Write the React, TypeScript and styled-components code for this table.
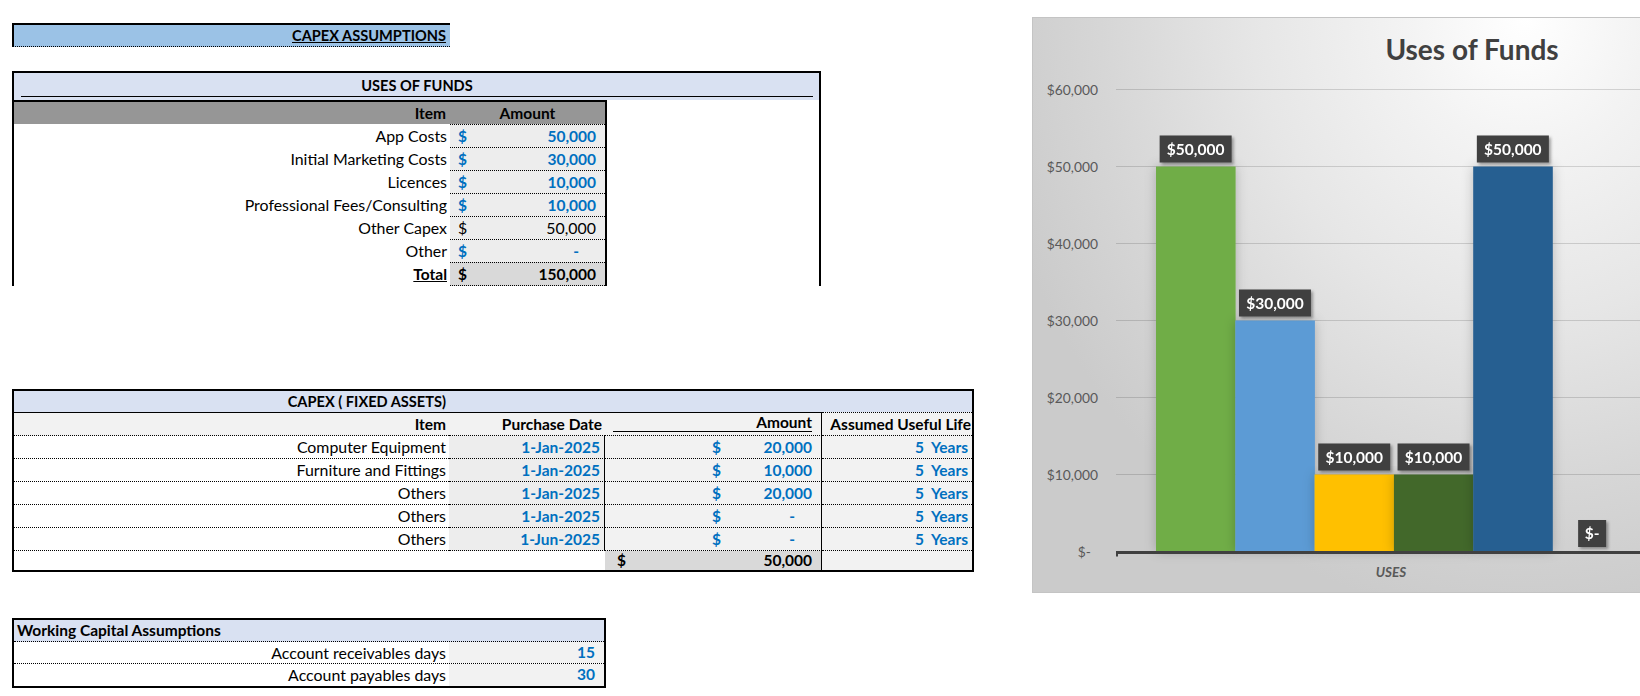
import React from "react";
import styled, { createGlobalStyle } from "styled-components";

const BLUE = "#0070C0";
const HEAD_BLUE = "#D9E1F2";

const GlobalStyle = createGlobalStyle`
  html, body { margin: 0; padding: 0; background: #fff; }
  body {
    font-family: Lato, "Liberation Sans", Arial, sans-serif;
    font-size: 15.9px;
    color: #000;
  }
  *, *::before, *::after { box-sizing: border-box; }
`;

const Page = styled.main`
  width: 1640px;
  height: 696px;
  overflow: hidden;
  display: flex;
  align-items: flex-start;
  padding-left: 12px;
`;

const LeftColumn = styled.div`
  width: 962px;
  flex-shrink: 0;
  display: flex;
  flex-direction: column;
  align-items: flex-start;
  padding-top: 23px;
`;

const SectionBanner = styled.h1`
  margin: 0;
  width: 438px;
  height: 24px;
  background: #9bc2e6;
  border-top: 2px solid #000;
  border-left: 2px solid #000;
  border-bottom: 1px dotted #000;
  display: flex;
  justify-content: flex-end;
  align-items: flex-end;
  padding: 0 4px 0 0;
  font-size: 14.6px;
  font-weight: 700;
  text-decoration: underline;
  line-height: 20px;
`;

/* ---------- Uses of funds ---------- */
const UsesBox = styled.section`
  margin-top: 24px;
  width: 809px;
  border: 2px solid #000;
  border-bottom: 0;
`;

const UsesTitleBar = styled.div`
  height: 27px;
  background: ${HEAD_BLUE};
  padding: 0 6px 3px 7px;
  display: flex;
`;

const UsesTitle = styled.h2`
  margin: 0;
  flex: 1;
  font-size: 14.6px;
  font-weight: 700;
  text-align: center;
  border-bottom: 1px solid #000;
  padding-top: 2px;
  line-height: 21px;
`;

const UsesTable = styled.div`
  width: 593px;
  border-top: 2px solid #000;
  border-right: 2px solid #000;
`;

const UsesHeadRow = styled.div`
  display: grid;
  grid-template-columns: 436px 1fr;
  height: 22px;
  background: #969696;
  font-weight: 700;
  font-size: 15.5px;
  line-height: 22px;
`;

const UsesHeadCell = styled.div<{ $align: "right" | "center" }>`
  text-align: ${(p) => p.$align};
  padding-right: ${(p) => (p.$align === "right" ? "4px" : "0")};
`;

const UsesRow = styled.div<{ $last?: boolean }>`
  display: grid;
  grid-template-columns: 436px 1fr;
  height: ${(p) => (p.$last ? 24 : 23)}px;
  line-height: 22px;
`;

const UsesLabel = styled.div<{ $total?: boolean }>`
  text-align: right;
  padding-right: 3px;
  border-top: 1px solid transparent;
  font-weight: ${(p) => (p.$total ? 700 : 400)};
  font-size: ${(p) => (p.$total ? "15.5px" : "15.9px")};
  text-decoration: ${(p) => (p.$total ? "underline" : "none")};
`;

const MoneyCell = styled.div<{
  $bg: string;
  $color: string;
  $bold: boolean;
  $dash?: boolean;
  $last?: boolean;
  $padLeft: number;
  $padRight: number;
}>`
  display: flex;
  justify-content: space-between;
  background: ${(p) => p.$bg};
  color: ${(p) => p.$color};
  font-weight: ${(p) => (p.$bold ? 700 : 400)};
  font-size: ${(p) => (p.$bold ? "15.5px" : "15.9px")};
  border-top: 1px dotted #000;
  border-bottom: ${(p) => (p.$last ? "1px dotted #000" : "0")};
  padding: 0 ${(p) => p.$padRight + (p.$dash ? 17 : 0)}px 0 ${(p) => p.$padLeft}px;
`;

/* ---------- Capex fixed assets ---------- */
const CapexBox = styled.section`
  margin-top: 103px;
  width: 962px;
  border: 2px solid #000;
`;

const CapexRow = styled.div<{ $h: number; $bg?: string }>`
  display: grid;
  grid-template-columns: 435px 156px 217px 150px;
  height: ${(p) => p.$h}px;
  background: ${(p) => p.$bg || "transparent"};
`;

type Edge = "solid" | "dotted" | "none";

const CapexCell = styled.div<{
  $bg?: string;
  $top?: Edge;
  $bottom?: Edge;
  $rightLine?: boolean;
  $bold?: boolean;
  $caps?: boolean;
  $color?: string;
  $lh: number;
  $pr?: number;
}>`
  background: ${(p) => p.$bg || "transparent"};
  border-top: ${(p) => (p.$top && p.$top !== "none" ? `1px ${p.$top} #000` : "0")};
  border-bottom: ${(p) => (p.$bottom && p.$bottom !== "none" ? `1px ${p.$bottom} #000` : "0")};
  border-right: ${(p) => (p.$rightLine ? "1px solid #000" : "0")};
  text-align: right;
  font-weight: ${(p) => (p.$bold ? 700 : 400)};
  font-size: ${(p) => (p.$caps ? "14.6px" : p.$bold ? "15.5px" : "15.9px")};
  color: ${(p) => p.$color || "#000"};
  line-height: ${(p) => p.$lh}px;
  padding-right: ${(p) => p.$pr ?? 3}px;
  white-space: pre;
`;

const CapexMoney = styled.div<{
  $bg: string;
  $bottom: boolean;
  $color: string;
  $dash?: boolean;
  $padLeft: number;
  $lh: number;
}>`
  display: flex;
  justify-content: space-between;
  background: ${(p) => p.$bg};
  border-right: 1px solid #000;
  border-bottom: ${(p) => (p.$bottom ? "1px dotted #000" : "0")};
  color: ${(p) => p.$color};
  font-weight: 700;
  font-size: 15.5px;
  line-height: ${(p) => p.$lh}px;
  padding: 0 ${(p) => (p.$dash ? 26 : 9)}px 0 ${(p) => p.$padLeft}px;
`;

const AmountHeadCell = styled.div`
  background: #f2f2f2;
  border-top: 1px solid #000;
  border-bottom: 1px dotted #000;
  border-right: 1px solid #000;
  padding: 0 9px 0 8px;
`;

const AmountHeadLabel = styled.div`
  font-weight: 700;
  font-size: 15.5px;
  text-align: right;
  line-height: 18px;
  border-bottom: 1px solid #000;
`;

/* ---------- Working capital ---------- */
const WcBox = styled.section`
  margin-top: 46px;
  width: 594px;
  border: 2px solid #000;
`;

const WcHead = styled.div`
  height: 22px;
  background: ${HEAD_BLUE};
  border-bottom: 1px dotted #000;
  font-weight: 700;
  font-size: 15.5px;
  line-height: 21px;
  padding-left: 3px;
`;

const WcRow = styled.div<{ $sep?: boolean }>`
  display: grid;
  grid-template-columns: 435px 1fr;
  height: 22px;
  border-bottom: ${(p) => (p.$sep ? "1px dotted #000" : "0")};
  line-height: 21px;
`;

const WcLabel = styled.div`
  text-align: right;
  padding-right: 3px;
`;

const WcValue = styled.div`
  background: #f2f2f2;
  text-align: right;
  padding-right: 9px;
  color: ${BLUE};
  font-weight: 700;
  font-size: 15.5px;
`;

/* ---------- Chart ---------- */
const ChartCard = styled.figure`
  margin: 17px 0 0 58px;
  flex-shrink: 0;
  width: 880px;
  height: 576px;
  border: 1px solid #c4c4c4;
  background: radial-gradient(
    ellipse 62% 105% at 56% 0%,
    #ffffff 0%,
    #f3f3f3 22%,
    #e6e6e6 50%,
    #d6d6d6 78%,
    #cbcbcb 100%
  );
`;

const ChartSvg = styled.svg`
  display: block;
  width: 878px;
  height: 574px;
  font-family: Lato, "Liberation Sans", Arial, sans-serif;
`;

const usesRows = [
  { label: "App Costs", value: "50,000", blue: true },
  { label: "Initial Marketing Costs", value: "30,000", blue: true },
  { label: "Licences", value: "10,000", blue: true },
  { label: "Professional Fees/Consulting", value: "10,000", blue: true },
  { label: "Other Capex", value: "50,000", blue: false },
  { label: "Other", value: "-", blue: true },
];

const capexRows = [
  { item: "Computer Equipment", date: "1-Jan-2025", amount: "20,000" },
  { item: "Furniture and Fittings", date: "1-Jan-2025", amount: "10,000" },
  { item: "Others", date: "1-Jan-2025", amount: "20,000" },
  { item: "Others", date: "1-Jan-2025", amount: "-" },
  { item: "Others", date: "1-Jun-2025", amount: "-" },
];

const bars = [
  { value: 50000, color: "#70AD47", label: "$50,000" },
  { value: 30000, color: "#5B9BD5", label: "$30,000" },
  { value: 10000, color: "#FFC000", label: "$10,000" },
  { value: 10000, color: "#43682B", label: "$10,000" },
  { value: 50000, color: "#255E91", label: "$50,000" },
  { value: 0, color: "#9E480E", label: "$-" },
];

const ZERO_Y = 533.5;
const STEP = 77;
const yFor = (v: number) => ZERO_Y - (v / 10000) * STEP;
const BAR_X0 = 123;
const BAR_W = 79.3;

function UsesChart() {
  const ticks = [60000, 50000, 40000, 30000, 20000, 10000, 0];
  const fmt = (v: number) => (v === 0 ? "$-" : `$${v.toLocaleString("en-US")}`);
  return (
    <ChartCard>
      <ChartSvg viewBox="0 0 878 574">
        <defs>
          <filter id="barShadow" x="-30%" y="-10%" width="160%" height="130%">
            <feDropShadow dx="0" dy="0" stdDeviation="6" floodColor="#000" floodOpacity="0.22" />
          </filter>
          <filter id="labelShadow" x="-20%" y="-20%" width="150%" height="160%">
            <feDropShadow dx="2" dy="2" stdDeviation="1.5" floodColor="#000" floodOpacity="0.35" />
          </filter>
        </defs>
        <text x="439" y="42" textAnchor="middle" fontSize="28" fontWeight="700" fill="#404040">
          Uses of Funds
        </text>
        {ticks.map((t) => (
          <g key={t}>
            {t !== 0 && (
              <line
                x1="83"
                x2="878"
                y1={yFor(t)}
                y2={yFor(t)}
                stroke="#000"
                strokeOpacity="0.14"
                strokeWidth="1"
              />
            )}
            <text x={t === 0 ? 58 : 65} y={yFor(t) + 5} textAnchor="end" fontSize="13.8" fill="#595959">
              {fmt(t)}
            </text>
          </g>
        ))}
        {bars.map((b, i) =>
          b.value > 0 ? (
            <rect
              key={`b${i}`}
              x={BAR_X0 + i * BAR_W}
              y={yFor(b.value)}
              width={BAR_W + 0.3}
              height={ZERO_Y - yFor(b.value)}
              fill={b.color}
              filter="url(#barShadow)"
            />
          ) : null
        )}
        <line x1="83" x2="878" y1={ZERO_Y + 1} y2={ZERO_Y + 1} stroke="#404040" strokeWidth="3.2" />
        <line x1="84" x2="84" y1={ZERO_Y} y2={ZERO_Y + 5} stroke="#404040" strokeWidth="2" />
        {bars.map((b, i) => {
          const w = b.value > 0 ? 72 : 28;
          const cx = BAR_X0 + i * BAR_W + BAR_W / 2;
          const bottom = b.value > 0 ? yFor(b.value) - 4 : 529;
          return (
            <g key={`l${i}`} filter="url(#labelShadow)">
              <rect x={cx - w / 2} y={bottom - 27} width={w} height={27} fill="#3f3f3f" />
              <text x={cx} y={bottom - 8} textAnchor="middle" fontSize="15.5" fontWeight="700" fill="#fff">
                {b.label}
              </text>
            </g>
          );
        })}
        <text x="358" y="559" textAnchor="middle" fontSize="13.5" fontWeight="700" fontStyle="italic" fill="#595959">
          USES
        </text>
      </ChartSvg>
    </ChartCard>
  );
}

export default function App() {
  return (
    <>
      <GlobalStyle />
      <Page>
        <LeftColumn>
          <SectionBanner>CAPEX ASSUMPTIONS</SectionBanner>

          <UsesBox>
            <UsesTitleBar>
              <UsesTitle>USES OF FUNDS</UsesTitle>
            </UsesTitleBar>
            <UsesTable>
              <UsesHeadRow>
                <UsesHeadCell $align="right">Item</UsesHeadCell>
                <UsesHeadCell $align="center">Amount</UsesHeadCell>
              </UsesHeadRow>
              {usesRows.map((r, i) => (
                <UsesRow key={i}>
                  <UsesLabel>{r.label}</UsesLabel>
                  <MoneyCell
                    $bg="#EDEDED"
                    $color={r.blue ? BLUE : "#000"}
                    $bold={r.blue}
                    $dash={r.value === "-"}
                    $padLeft={8}
                    $padRight={9}
                  >
                    <span>$</span>
                    <span>{r.value}</span>
                  </MoneyCell>
                </UsesRow>
              ))}
              <UsesRow $last>
                <UsesLabel $total>Total</UsesLabel>
                <MoneyCell $bg="#D9D9D9" $color="#000" $bold $last $padLeft={8} $padRight={9}>
                  <span>$</span>
                  <span>150,000</span>
                </MoneyCell>
              </UsesRow>
            </UsesTable>
          </UsesBox>

          <CapexBox>
            <CapexRow $h={21} $bg={HEAD_BLUE}>
              <CapexCell $lh={21} $bold $caps>
                CAPEX ( FIXED ASSETS)
              </CapexCell>
            </CapexRow>
            <CapexRow $h={24}>
              <CapexCell $bg="#F2F2F2" $top="solid" $bottom="dotted" $lh={22} $bold>
                Item
              </CapexCell>
              <CapexCell $bg="#F2F2F2" $top="solid" $bottom="dotted" $lh={22} $bold>
                Purchase Date
              </CapexCell>
              <AmountHeadCell>
                <AmountHeadLabel>Amount</AmountHeadLabel>
              </AmountHeadCell>
              <CapexCell $bg="#F2F2F2" $top="dotted" $bottom="dotted" $lh={22} $bold $pr={1}>
                Assumed Useful Life
              </CapexCell>
            </CapexRow>
            {capexRows.map((r, i) => (
              <CapexRow key={i} $h={23}>
                <CapexCell $bottom="dotted" $lh={22}>
                  {r.item}
                </CapexCell>
                <CapexCell $bg="#EDEDED" $bottom="dotted" $rightLine $lh={22} $bold $color={BLUE} $pr={4}>
                  {r.date}
                </CapexCell>
                <CapexMoney $bg="#F2F2F2" $bottom $color={BLUE} $dash={r.amount === "-"} $padLeft={107} $lh={22}>
                  <span>$</span>
                  <span>{r.amount}</span>
                </CapexMoney>
                <CapexCell $bg="#F2F2F2" $bottom="dotted" $lh={22} $bold $color={BLUE} $pr={4}>
                  {"5  Years"}
                </CapexCell>
              </CapexRow>
            ))}
            <CapexRow $h={19}>
              <CapexCell $lh={19} />
              <CapexCell $lh={19} />
              <CapexMoney $bg="#D9D9D9" $bottom={false} $color="#000" $padLeft={12} $lh={19}>
                <span>$</span>
                <span>50,000</span>
              </CapexMoney>
              <CapexCell $bg="#F2F2F2" $lh={19} />
            </CapexRow>
          </CapexBox>

          <WcBox>
            <WcHead>Working Capital Assumptions</WcHead>
            <WcRow $sep>
              <WcLabel>Account receivables days</WcLabel>
              <WcValue>15</WcValue>
            </WcRow>
            <WcRow>
              <WcLabel>Account payables days</WcLabel>
              <WcValue>30</WcValue>
            </WcRow>
          </WcBox>
        </LeftColumn>

        <UsesChart />
      </Page>
    </>
  );
}
